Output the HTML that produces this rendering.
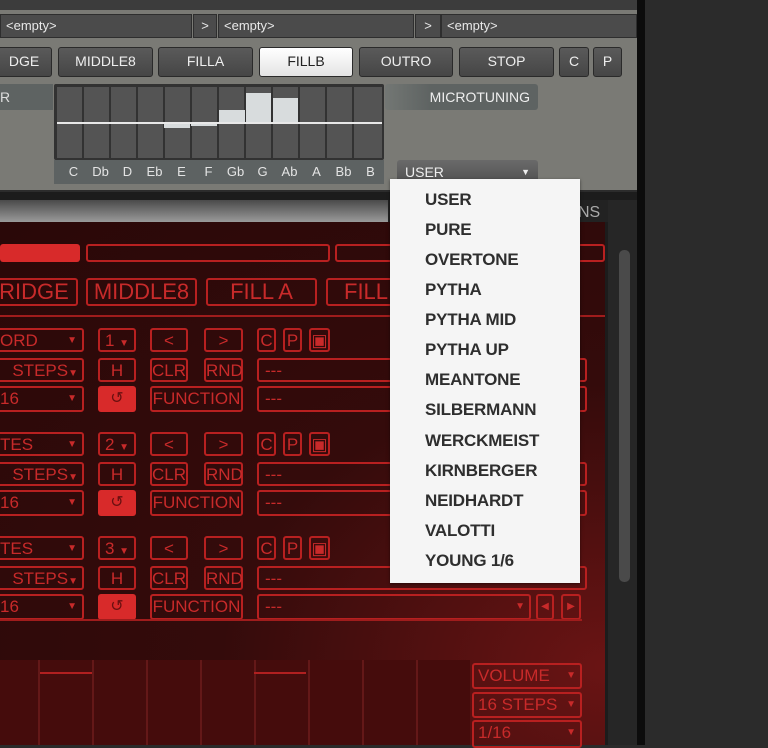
<!DOCTYPE html><html><head><style>
*{margin:0;padding:0;box-sizing:border-box}
body{width:768px;height:745px;overflow:hidden;background:#2b2b2b;position:relative;font-family:"Liberation Sans",sans-serif}
div{position:absolute}
.f{background:#4b4b4b;border:1px solid #2e2e2e;color:#e8e8e8;font-size:13px;line-height:22px;padding-left:5px}
.b{background:linear-gradient(#5a5a5a,#464646);border:1px solid #2a2a2a;border-radius:3px;color:#eee;font-size:14px;text-align:center;line-height:26px}
.r{border:2px solid #b82020;border-radius:3px;color:#c82a2a;font-size:17px;text-align:center;font-family:"Liberation Sans Narrow","Liberation Sans",sans-serif;line-height:21px}
.big{font-size:22px;line-height:24px}
.m{left:425px;font-size:17px;font-weight:bold;color:#2e2e2e;letter-spacing:-.2px}
.tri{font-size:10px}
</style></head><body>
<div style="left:0;top:0;width:645px;height:745px;background:#1c1c1c"></div>
<div style="left:637px;top:0;width:8px;height:745px;background:#0c0c0c"></div>
<div style="left:0;top:0;width:637px;height:10px;background:#3c3c3c"></div>
<div style="left:0;top:10px;width:637px;height:182px;background:#7a7a75;border-bottom:2px solid #2c2c2c"></div>
<div class="f" style="left:0;top:14px;width:192px;height:24px">&lt;empty&gt;</div>
<div class="f" style="left:193px;top:14px;width:24px;height:24px;padding:0;text-align:center">&gt;</div>
<div class="f" style="left:218px;top:14px;width:196px;height:24px">&lt;empty&gt;</div>
<div class="f" style="left:415px;top:14px;width:26px;height:24px;padding:0;text-align:center">&gt;</div>
<div class="f" style="left:441px;top:14px;width:196px;height:24px">&lt;empty&gt;</div>
<div class="b" style="left:-4px;top:47px;width:56px;height:30px">DGE</div>
<div class="b" style="left:58px;top:47px;width:95px;height:30px">MIDDLE8</div>
<div class="b" style="left:158px;top:47px;width:95px;height:30px">FILLA</div>
<div class="b" style="left:259px;top:47px;width:94px;height:30px;background:linear-gradient(#fff,#e4e4e4);color:#222">FILLB</div>
<div class="b" style="left:359px;top:47px;width:94px;height:30px">OUTRO</div>
<div class="b" style="left:459px;top:47px;width:95px;height:30px">STOP</div>
<div class="b" style="left:559px;top:47px;width:30px;height:30px">C</div>
<div class="b" style="left:593px;top:47px;width:29px;height:30px">P</div>
<div style="left:0;top:84px;width:53px;height:26px;background:#5e6362;color:#ddd;font-size:14px;line-height:26px">R</div>
<div style="left:385px;top:84px;width:153px;height:26px;background:linear-gradient(90deg,#737774,#5e6362 30%);border-radius:3px;color:#eee;font-size:14px;line-height:26px;text-align:right;padding-right:8px">MICROTUNING</div>
<div style="left:54px;top:84px;width:330px;height:76px;background:#323232;border-radius:2px"></div>
<div style="left:54px;top:160px;width:330px;height:24px;background:#5d6262;color:#e4e4e4;font-size:13px;line-height:24px;display:flex;padding-left:6px">
<span style="width:27px;text-align:center">C</span><span style="width:27px;text-align:center">Db</span><span style="width:27px;text-align:center">D</span><span style="width:27px;text-align:center">Eb</span><span style="width:27px;text-align:center">E</span><span style="width:27px;text-align:center">F</span><span style="width:27px;text-align:center">Gb</span><span style="width:27px;text-align:center">G</span><span style="width:27px;text-align:center">Ab</span><span style="width:27px;text-align:center">A</span><span style="width:27px;text-align:center">Bb</span><span style="width:27px;text-align:center">B</span></div>
<svg style="position:absolute;left:57px;top:87px" width="325" height="71">
<g fill="#545454"><rect x="0" width="25" height="71"/><rect x="27" width="25" height="71"/><rect x="54" width="25" height="71"/><rect x="81" width="25" height="71"/><rect x="108" width="25" height="71"/><rect x="135" width="25" height="71"/><rect x="162" width="25" height="71"/><rect x="189" width="25" height="71"/><rect x="216" width="25" height="71"/><rect x="243" width="25" height="71"/><rect x="270" width="25" height="71"/><rect x="297" width="28" height="71"/></g>
<g fill="#d8dcdd"><rect x="107" y="36" width="26" height="5"/><rect x="134" y="36" width="26" height="3"/><rect x="162" y="23" width="26" height="13"/><rect x="189" y="6" width="25" height="30"/><rect x="216" y="11" width="25" height="25"/></g>
<rect x="0" y="35" width="325" height="2" fill="#e8e8e8"/></svg>
<div style="left:397px;top:160px;width:141px;height:26px;background:linear-gradient(#6a6a6a,#4e4e4e);border-radius:3px;color:#eee;font-size:14px;line-height:24px;padding-left:8px">USER<span style="position:absolute;right:8px;font-size:9px">▼</span></div>
<div style="left:0;top:200px;width:388px;height:22px;background:linear-gradient(#4a4a4a,#9a9a9a)"></div>
<div style="left:388px;top:200px;width:220px;height:22px;background:#222"></div>
<div style="left:578px;top:204px;color:#aaa;font-size:16px">NS</div>
<div style="left:0;top:222px;width:605px;height:523px;background:radial-gradient(ellipse at 100% 85%,#6a1414,#340b0b 45%,#2a0808)"></div>
<div style="left:0;top:244px;width:80px;height:18px;background:#d82a2a;border-radius:3px"></div>
<div class="r" style="left:86px;top:244px;width:244px;height:18px"></div>
<div class="r" style="left:335px;top:244px;width:270px;height:18px"></div>
<div class="r big" style="left:-10px;top:278px;width:88px;height:28px">RIDGE</div>
<div class="r big" style="left:86px;top:278px;width:111px;height:28px">MIDDLE8</div>
<div class="r big" style="left:206px;top:278px;width:111px;height:28px">FILL A</div>
<div class="r big" style="left:326px;top:278px;width:111px;height:28px;text-align:left;padding-left:16px">FILL</div>
<div style="left:0;top:315px;width:605px;height:2px;background:#a01c1c"></div>
<div style="left:0;top:328px">
<div class="r" style="left:-10px;top:0;width:94px;height:24px;text-align:left;padding-left:8px">ORD<span class="tri" style="position:absolute;right:5px">▼</span></div>
<div class="r" style="left:98px;top:0;width:38px;height:24px">1 <span class="tri">▼</span></div>
<div class="r" style="left:150px;top:0;width:38px;height:24px">&lt;</div>
<div class="r" style="left:204px;top:0;width:39px;height:24px">&gt;</div>
<div class="r" style="left:257px;top:0;width:19px;height:24px">C</div>
<div class="r" style="left:283px;top:0;width:19px;height:24px">P</div>
<div class="r" style="left:309px;top:0;width:21px;height:24px">▣</div>
<div class="r" style="left:-10px;top:30px;width:94px;height:24px;text-align:right;padding-right:4px">STEPS<span class="tri">▼</span></div>
<div class="r" style="left:98px;top:30px;width:38px;height:24px">H</div>
<div class="r" style="left:150px;top:30px;width:38px;height:24px">CLR</div>
<div class="r" style="left:204px;top:30px;width:39px;height:24px">RND</div>
<div class="r" style="left:257px;top:30px;width:330px;height:24px;text-align:left;padding-left:6px">---</div>
<div class="r" style="left:-10px;top:58px;width:94px;height:26px;text-align:left;padding-left:8px">16<span class="tri" style="position:absolute;right:5px">▼</span></div>
<div style="left:98px;top:58px;width:38px;height:26px;background:#d82a2a;border-radius:3px;color:#6a1010;text-align:center;line-height:26px">↺</div>
<div class="r" style="left:150px;top:58px;width:93px;height:26px">FUNCTION</div>
<div class="r" style="left:257px;top:58px;width:330px;height:26px;text-align:left;padding-left:6px">---</div>
</div>
<div style="left:0;top:432px">
<div class="r" style="left:-10px;top:0;width:94px;height:24px;text-align:left;padding-left:8px">TES<span class="tri" style="position:absolute;right:5px">▼</span></div>
<div class="r" style="left:98px;top:0;width:38px;height:24px">2 <span class="tri">▼</span></div>
<div class="r" style="left:150px;top:0;width:38px;height:24px">&lt;</div>
<div class="r" style="left:204px;top:0;width:39px;height:24px">&gt;</div>
<div class="r" style="left:257px;top:0;width:19px;height:24px">C</div>
<div class="r" style="left:283px;top:0;width:19px;height:24px">P</div>
<div class="r" style="left:309px;top:0;width:21px;height:24px">▣</div>
<div class="r" style="left:-10px;top:30px;width:94px;height:24px;text-align:right;padding-right:4px">STEPS<span class="tri">▼</span></div>
<div class="r" style="left:98px;top:30px;width:38px;height:24px">H</div>
<div class="r" style="left:150px;top:30px;width:38px;height:24px">CLR</div>
<div class="r" style="left:204px;top:30px;width:39px;height:24px">RND</div>
<div class="r" style="left:257px;top:30px;width:330px;height:24px;text-align:left;padding-left:6px">---</div>
<div class="r" style="left:-10px;top:58px;width:94px;height:26px;text-align:left;padding-left:8px">16<span class="tri" style="position:absolute;right:5px">▼</span></div>
<div style="left:98px;top:58px;width:38px;height:26px;background:#d82a2a;border-radius:3px;color:#6a1010;text-align:center;line-height:26px">↺</div>
<div class="r" style="left:150px;top:58px;width:93px;height:26px">FUNCTION</div>
<div class="r" style="left:257px;top:58px;width:330px;height:26px;text-align:left;padding-left:6px">---</div>
</div>
<div style="left:0;top:536px">
<div class="r" style="left:-10px;top:0;width:94px;height:24px;text-align:left;padding-left:8px">TES<span class="tri" style="position:absolute;right:5px">▼</span></div>
<div class="r" style="left:98px;top:0;width:38px;height:24px">3 <span class="tri">▼</span></div>
<div class="r" style="left:150px;top:0;width:38px;height:24px">&lt;</div>
<div class="r" style="left:204px;top:0;width:39px;height:24px">&gt;</div>
<div class="r" style="left:257px;top:0;width:19px;height:24px">C</div>
<div class="r" style="left:283px;top:0;width:19px;height:24px">P</div>
<div class="r" style="left:309px;top:0;width:21px;height:24px">▣</div>
<div class="r" style="left:-10px;top:30px;width:94px;height:24px;text-align:right;padding-right:4px">STEPS<span class="tri">▼</span></div>
<div class="r" style="left:98px;top:30px;width:38px;height:24px">H</div>
<div class="r" style="left:150px;top:30px;width:38px;height:24px">CLR</div>
<div class="r" style="left:204px;top:30px;width:39px;height:24px">RND</div>
<div class="r" style="left:257px;top:30px;width:330px;height:24px;text-align:left;padding-left:6px">---</div>
<div class="r" style="left:-10px;top:58px;width:94px;height:26px;text-align:left;padding-left:8px">16<span class="tri" style="position:absolute;right:5px">▼</span></div>
<div style="left:98px;top:58px;width:38px;height:26px;background:#d82a2a;border-radius:3px;color:#6a1010;text-align:center;line-height:26px">↺</div>
<div class="r" style="left:150px;top:58px;width:93px;height:26px">FUNCTION</div>
<div class="r" style="left:257px;top:58px;width:274px;height:26px;text-align:left;padding-left:6px">---<span class="tri" style="position:absolute;right:4px">▼</span></div>
<div class="r" style="left:536px;top:58px;width:18px;height:26px;font-size:10px">◀</div>
<div class="r" style="left:561px;top:58px;width:20px;height:26px;font-size:10px">▶</div>
</div>
<div style="left:0;top:619px;width:582px;height:2px;background:#a01c1c"></div>
<div style="left:0;top:660px;width:470px;height:85px;background:#450c0c;background-image:repeating-linear-gradient(90deg,transparent 0 38px,#641818 38px 40px,transparent 40px 54px)"></div>
<div style="left:40px;top:672px;width:52px;height:2px;background:#b02020"></div>
<div style="left:254px;top:672px;width:52px;height:2px;background:#b02020"></div>
<div class="r" style="left:472px;top:663px;width:110px;height:26px;text-align:left;padding-left:4px">VOLUME<span class="tri" style="position:absolute;right:4px">▼</span></div>
<div class="r" style="left:472px;top:692px;width:110px;height:26px;text-align:left;padding-left:4px">16 STEPS<span class="tri" style="position:absolute;right:4px">▼</span></div>
<div class="r" style="left:472px;top:720px;width:110px;height:28px;text-align:left;padding-left:4px">1/16<span class="tri" style="position:absolute;right:4px">▼</span></div>
<div style="left:608px;top:200px;width:29px;height:545px;background:#262626"></div>
<div style="left:619px;top:250px;width:11px;height:332px;background:#4a4a4a;border-radius:5px"></div>
<div style="left:390px;top:179px;width:190px;height:404px;background:#f5f5f5;box-shadow:0 1px 3px rgba(0,0,0,.5)"></div>
<div class="m" style="top:190px">USER</div>
<div class="m" style="top:220px">PURE</div>
<div class="m" style="top:250px">OVERTONE</div>
<div class="m" style="top:280px">PYTHA</div>
<div class="m" style="top:310px">PYTHA MID</div>
<div class="m" style="top:340px">PYTHA UP</div>
<div class="m" style="top:370px">MEANTONE</div>
<div class="m" style="top:400px">SILBERMANN</div>
<div class="m" style="top:431px">WERCKMEIST</div>
<div class="m" style="top:461px">KIRNBERGER</div>
<div class="m" style="top:491px">NEIDHARDT</div>
<div class="m" style="top:521px">VALOTTI</div>
<div class="m" style="top:551px">YOUNG 1/6</div>
</body></html>
